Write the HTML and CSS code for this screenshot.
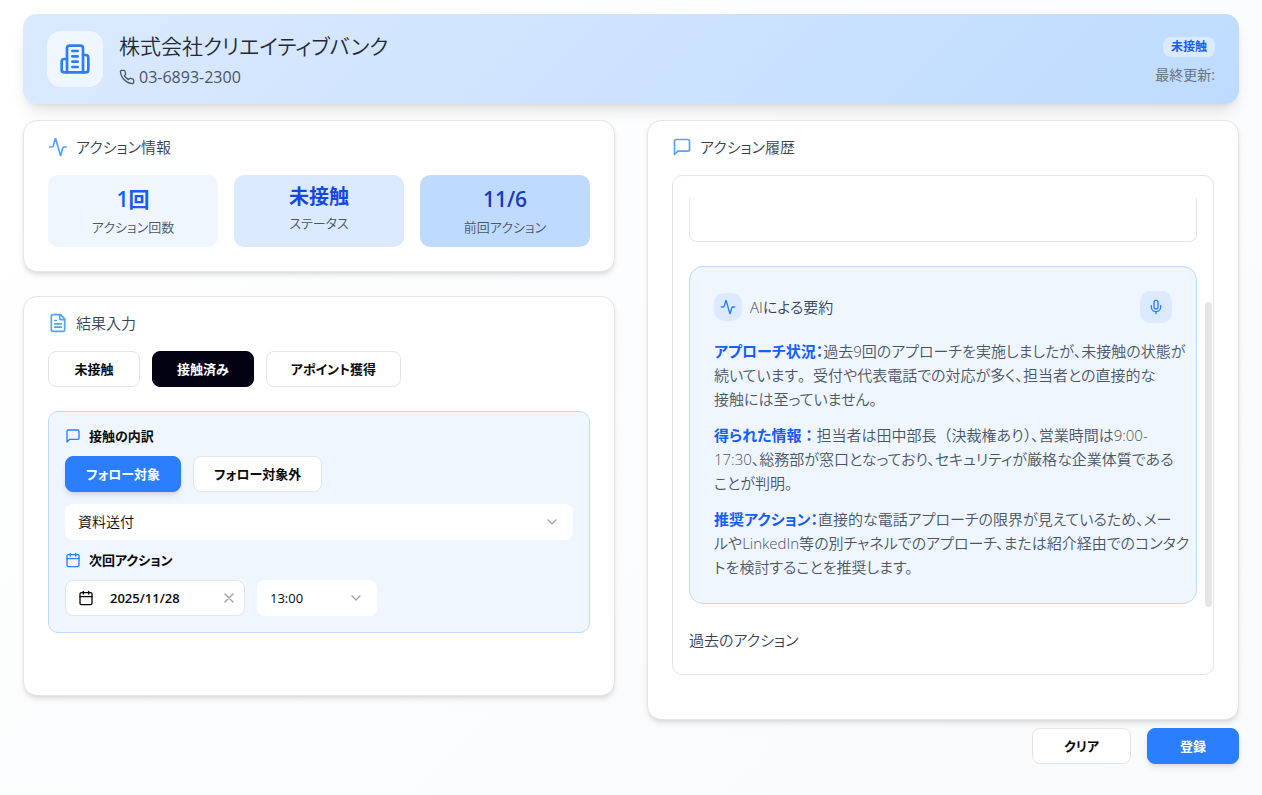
FILE: index.html
```html
<!DOCTYPE html>
<html lang="ja">

<head>
    <meta charset="UTF-8">
    <meta name="viewport" content="width=device-width, initial-scale=1.0">
    <title>株式会社クリエイティブバンク</title>
    <link rel="stylesheet" href="styles.css">
</head>

<body>

    <!-- Shared icons -->
    <svg class="icon-defs" aria-hidden="true">
        <symbol id="icon-activity" viewBox="0 0 24 24">
            <path d="M22 12h-2.48a2 2 0 0 0-1.93 1.46l-2.35 8.36a.25.25 0 0 1-.48 0L9.24 2.18a.25.25 0 0 0-.48 0l-2.35 8.36A2 2 0 0 1 4.49 12H2" />
        </symbol>
        <symbol id="icon-message" viewBox="0 0 24 24">
            <path d="M21 15a2 2 0 0 1-2 2H7l-4 4V5a2 2 0 0 1 2-2h14a2 2 0 0 1 2 2z" />
        </symbol>
        <symbol id="icon-calendar" viewBox="0 0 24 24">
            <path d="M8 2v4M16 2v4M3 10h18" />
            <rect width="18" height="18" x="3" y="4" rx="2" />
        </symbol>
        <symbol id="icon-chevron" viewBox="0 0 24 24">
            <path d="m6 9 6 6 6-6" />
        </symbol>
    </svg>

    <div class="container">
        <header class="company-header">
            <div class="company-icon">
                <svg class="icon" viewBox="0 0 24 24">
                    <path d="M6 22V4a2 2 0 0 1 2-2h8a2 2 0 0 1 2 2v18Z" />
                    <path d="M6 12H4a2 2 0 0 0-2 2v6a2 2 0 0 0 2 2h2" />
                    <path d="M18 9h2a2 2 0 0 1 2 2v9a2 2 0 0 1-2 2h-2" />
                    <path d="M10 6h4M10 10h4M10 14h4M10 18h4" />
                </svg>
            </div>
            <div class="company-info">
                <h1>株式会社クリエイティブバンク</h1>
                <p class="company-phone">
                    <svg class="icon" viewBox="0 0 24 24">
                        <path d="M22 16.92v3a2 2 0 0 1-2.18 2 19.79 19.79 0 0 1-8.63-3.07 19.5 19.5 0 0 1-6-6 19.79 19.79 0 0 1-3.07-8.67A2 2 0 0 1 4.11 2h3a2 2 0 0 1 2 1.72 12.84 12.84 0 0 0 .7 2.81 2 2 0 0 1-.45 2.11L8.09 9.91a16 16 0 0 0 6 6l1.27-1.27a2 2 0 0 1 2.11-.45 12.84 12.84 0 0 0 2.81.7A2 2 0 0 1 22 16.92z" />
                    </svg>
                    03-6893-2300
                </p>
            </div>
            <div class="company-status">
                <span class="badge">未接触</span>
                <p>最終更新:</p>
            </div>
        </header>

        <main class="columns">
            <div class="column">
                <section class="card">
                    <h2 class="card-title"><svg class="icon"><use href="#icon-activity" /></svg>アクション情報</h2>
                    <div class="stats">
                        <div class="stat stat-count">
                            <strong>1回</strong>
                            <span>アクション回数</span>
                        </div>
                        <div class="stat stat-status">
                            <strong>未接触</strong>
                            <span>ステータス</span>
                        </div>
                        <div class="stat stat-last">
                            <strong>11/6</strong>
                            <span>前回アクション</span>
                        </div>
                    </div>
                </section>

                <section class="card result-card">
                    <h2 class="card-title">
                        <svg class="icon" viewBox="0 0 24 24">
                            <path d="M15 2H6a2 2 0 0 0-2 2v16a2 2 0 0 0 2 2h12a2 2 0 0 0 2-2V7Z" />
                            <path d="M14 2v4a2 2 0 0 0 2 2h4M10 9H8M16 13H8M16 17H8" />
                        </svg>結果入力
                    </h2>
                    <div class="button-row">
                        <button class="btn" type="button">未接触</button>
                        <button class="btn btn-dark" type="button">接触済み</button>
                        <button class="btn" type="button">アポイント獲得</button>
                    </div>

                    <div class="detail-panel">
                        <label class="field-label" for="contact-detail"><svg class="icon"><use href="#icon-message" /></svg>接触の内訳</label>
                        <div class="button-row">
                            <button class="btn btn-compact btn-primary" type="button">フォロー対象</button>
                            <button class="btn btn-compact" type="button">フォロー対象外</button>
                        </div>
                        <div class="select-box">
                            <select id="contact-detail">
                                <option>資料送付</option>
                            </select>
                            <svg class="icon"><use href="#icon-chevron" /></svg>
                        </div>
                        <label class="field-label" for="next-date"><svg class="icon"><use href="#icon-calendar" /></svg>次回アクション</label>
                        <div class="button-row">
                            <div class="date-box">
                                <button id="next-date" class="date-btn" type="button"><svg class="icon"><use href="#icon-calendar" /></svg>2025/11/28</button>
                                <button class="clear-date" type="button" aria-label="日付をクリア">
                                    <svg class="icon" viewBox="0 0 24 24"><path d="M18 6 6 18M6 6l12 12" /></svg>
                                </button>
                            </div>
                            <div class="select-box time-box">
                                <select aria-label="時刻">
                                    <option>13:00</option>
                                </select>
                                <svg class="icon"><use href="#icon-chevron" /></svg>
                            </div>
                        </div>
                    </div>
                </section>
            </div>

            <div class="column">
                <section class="card history-card">
                    <h2 class="card-title"><svg class="icon"><use href="#icon-message" /></svg>アクション履歴</h2>
                    <div class="history">
                        <textarea class="memo" aria-label="メモ"></textarea>

                        <article class="summary">
                            <div class="summary-header">
                                <span class="summary-icon"><svg class="icon"><use href="#icon-activity" /></svg></span>
                                <h3>AIによる要約</h3>
                                <button class="mic-btn" type="button" aria-label="音声入力">
                                    <svg class="icon" viewBox="0 0 24 24">
                                        <path d="M12 19v3M19 10v2a7 7 0 0 1-14 0v-2" />
                                        <rect x="9" y="2" width="6" height="13" rx="3" />
                                    </svg>
                                </button>
                            </div>
                            <p><strong>アプローチ状況：</strong>過去9回のアプローチを実施しましたが、未接触の状態が<br>続いています<span class="full">。</span>受付や代表電話での対応が多く、担当者との直接的な<br>接触には至っていません。</p>
                            <p><strong>得られた情報<span class="full">：</span></strong>担当者は田中部長<span class="full">（</span>決裁権あり<span class="full">）</span>、営業時間は9:00-<br>17:30、総務部が窓口となっており、セキュリティが厳格な企業体質である<br>ことが判明。</p>
                            <p><strong>推奨アクション：</strong>直接的な電話アプローチの限界が見えているため、メー<br>ルやLinkedIn等の別チャネルでのアプローチ、または紹介経由でのコンタク<br>トを検討することを推奨します。</p>
                        </article>

                        <h3 class="past-title">過去のアクション</h3>
                        <span class="scroll-thumb"></span>
                    </div>
                </section>
            </div>
        </main>

        <footer class="actions">
            <button class="btn btn-wide" type="button">クリア</button>
            <button class="btn btn-wide btn-primary" type="button">登録</button>
        </footer>
    </div>

</body>

</html>
```
FILE: styles.css
```css
* {
    box-sizing: border-box;
}

body {
    margin: 0;
    min-height: 100vh;
    background: linear-gradient(135deg, #ffffff, #f8fafc);
    color: #0a0a0a;
    font-family: "Open Sans", "Noto Sans CJK JP", sans-serif;
    font-size: 15px;
    line-height: 24px;
    font-feature-settings: "palt";
}

h1,
h2,
h3,
p {
    margin: 0;
    font-weight: 350;
}

button,
select,
textarea {
    font: inherit;
    font-feature-settings: inherit;
    color: inherit;
}

button {
    cursor: pointer;
}

.icon-defs {
    display: none;
}

.icon {
    width: 16px;
    height: 16px;
    flex-shrink: 0;
    fill: none;
    stroke: currentColor;
    stroke-width: 2;
    stroke-linecap: round;
    stroke-linejoin: round;
}

.container {
    padding: 14px 23px;
}

/* Company header */
.company-header {
    display: flex;
    align-items: center;
    gap: 16px;
    padding: 16px 24px;
    border-radius: 14px;
    background: linear-gradient(135deg, #dbeafe, #bedbff);
    box-shadow: 0 10px 15px -3px rgba(0, 0, 0, 0.1), 0 4px 6px -4px rgba(0, 0, 0, 0.1);
}

.company-icon {
    display: flex;
    align-items: center;
    justify-content: center;
    width: 56px;
    height: 56px;
    border-radius: 14px;
    background: #eff6ff;
    color: #2b7fff;
}

.company-icon .icon {
    width: 32px;
    height: 32px;
}

.company-info {
    flex: 1;
}

h1 {
    margin-bottom: 4px;
    font-size: 21px;
    line-height: 32px;
    color: #1e2939;
}

.company-phone {
    display: flex;
    align-items: center;
    gap: 4px;
    font-size: 16px;
    font-weight: 400;
    line-height: 22px;
    color: #4a5565;
}

.company-status {
    display: flex;
    flex-direction: column;
    align-items: flex-end;
    gap: 8px;
    padding-top: 4px;
    font-size: 14px;
    line-height: 20px;
    color: #6a7282;
}

.company-status p {
    font-weight: 400;
}

.badge {
    padding: 0 8px;
    border-radius: 8px;
    background: #dbeafe;
    color: #155dfc;
    font-size: 12px;
    font-weight: 600;
}

/* Cards */
.columns {
    display: grid;
    grid-template-columns: repeat(2, minmax(0, 1fr));
    align-items: start;
    gap: 32px;
    margin-top: 16px;
}

.column {
    display: flex;
    flex-direction: column;
    gap: 24px;
}

.card {
    padding: 14px 24px 24px;
    border: 1px solid #e5e5e5;
    border-radius: 14px;
    background: #ffffff;
    box-shadow: 0 4px 6px -1px rgba(0, 0, 0, 0.1), 0 2px 4px -2px rgba(0, 0, 0, 0.1);
}

.card-title {
    display: flex;
    align-items: center;
    gap: 8px;
    margin-bottom: 16px;
    font-size: 15px;
    color: #364153;
}

.card-title .icon {
    width: 20px;
    height: 20px;
    color: #51a2ff;
}

.stats {
    display: grid;
    grid-template-columns: repeat(3, 1fr);
    gap: 16px;
}

.stat {
    display: flex;
    flex-direction: column;
    padding: 8px;
    border-radius: 10px;
    text-align: center;
}

.stat strong {
    font-size: 21px;
    font-weight: 600;
    line-height: 32px;
}

.stat span {
    font-size: 13px;
    font-weight: 350;
    color: #4a5565;
}

.stat-count {
    background: #eff6ff;
    color: #155dfc;
}

.stat-status {
    background: #dbeafe;
    color: #1447e6;
}

.stat-status strong {
    font-size: 20px;
    line-height: 28px;
}

.stat-last {
    background: #bedbff;
    color: #193cb8;
}

.result-card {
    min-height: 400px;
}

.history-card {
    min-height: 600px;
}

/* Buttons */
.button-row {
    display: flex;
    gap: 12px;
}

.btn {
    min-width: 92px;
    height: 36px;
    padding: 0 24px;
    border: 1px solid #e5e5e5;
    border-radius: 8px;
    background: #ffffff;
    font-size: 13px;
    font-weight: 600;
    line-height: 20px;
}

.btn-dark {
    border-color: #030213;
    background: #030213;
    color: #ffffff;
}

.btn-primary {
    border-color: #2b7fff;
    background: #2b7fff;
    color: #ffffff;
    box-shadow: 0 4px 6px -1px rgba(0, 0, 0, 0.1), 0 2px 4px -2px rgba(0, 0, 0, 0.1);
}

.btn-compact {
    padding: 0 20px;
}

.btn-wide {
    padding: 0 31px;
}

/* Contact detail */
.detail-panel {
    display: flex;
    flex-direction: column;
    gap: 12px;
    margin-top: 24px;
    padding: 16px;
    border: 1px solid #bedbff;
    border-radius: 10px;
    background: #eff6ff;
}

.field-label {
    display: flex;
    align-items: center;
    gap: 8px;
    font-size: 13px;
    font-weight: 600;
    line-height: 16px;
}

.field-label .icon {
    color: #2b7fff;
}

.select-box {
    position: relative;
}

.select-box select {
    display: block;
    width: 100%;
    height: 36px;
    padding: 0 13px;
    border: 0;
    border-radius: 8px;
    background: #ffffff;
    appearance: none;
    font-size: 14px;
    font-weight: 350;
}

.select-box .icon {
    position: absolute;
    top: 10px;
    right: 13px;
    color: #a3a3a3;
    pointer-events: none;
}

.time-box {
    width: 120px;
}

.time-box select {
    font-size: 13px;
    font-weight: 400;
}

.date-box {
    display: flex;
    align-items: center;
    width: 180px;
    height: 36px;
    padding: 0 7px 0 12px;
    border: 1px solid #e5e5e5;
    border-radius: 8px;
    background: #ffffff;
}

.date-btn,
.clear-date {
    display: flex;
    align-items: center;
    padding: 0;
    border: 0;
    background: none;
}

.date-btn {
    flex: 1;
    gap: 16px;
    font-size: 13px;
    font-weight: 600;
}

.clear-date {
    color: #99a1af;
}

/* Action history */
.history {
    position: relative;
    min-height: 500px;
    padding: 22px 16px;
    border: 1px solid #e5e5e5;
    border-radius: 10px;
}

.memo {
    display: block;
    width: 100%;
    height: 44px;
    border: 1px solid #e5e5e5;
    border-top: 0;
    border-radius: 0 0 8px 8px;
    background: #ffffff;
    resize: none;
}

.summary {
    margin-top: 24px;
    padding: 24px;
    border: 1px solid #bedbff;
    border-radius: 14px;
    background: #eff6ff;
}

.summary-header {
    display: flex;
    align-items: center;
    gap: 8px;
    margin-bottom: 16px;
}

.summary-header h3 {
    flex: 1;
    font-size: 15px;
    color: #364153;
}

.summary-icon,
.mic-btn {
    display: flex;
    align-items: center;
    justify-content: center;
    width: 28px;
    height: 28px;
    padding: 0;
    border: 0;
    border-radius: 10px;
    background: #dbeafe;
    color: #2b7fff;
}

.mic-btn {
    width: 32px;
    height: 32px;
}

.summary p {
    color: #4a5565;
    white-space: nowrap;
}

.summary p + p {
    margin-top: 12px;
}

.summary strong {
    color: #155dfc;
    font-weight: 600;
}

/* Full-width punctuation */
.full {
    font-feature-settings: normal;
}

.past-title {
    margin-top: 24px;
    font-size: 15px;
    color: #364153;
}

.scroll-thumb {
    position: absolute;
    top: 126px;
    right: 1px;
    width: 7px;
    height: 305px;
    border-radius: 4px;
    background: #e5e5e5;
}

/* Footer */
.actions {
    display: flex;
    justify-content: flex-end;
    gap: 16px;
    margin-top: 8px;
}
```
